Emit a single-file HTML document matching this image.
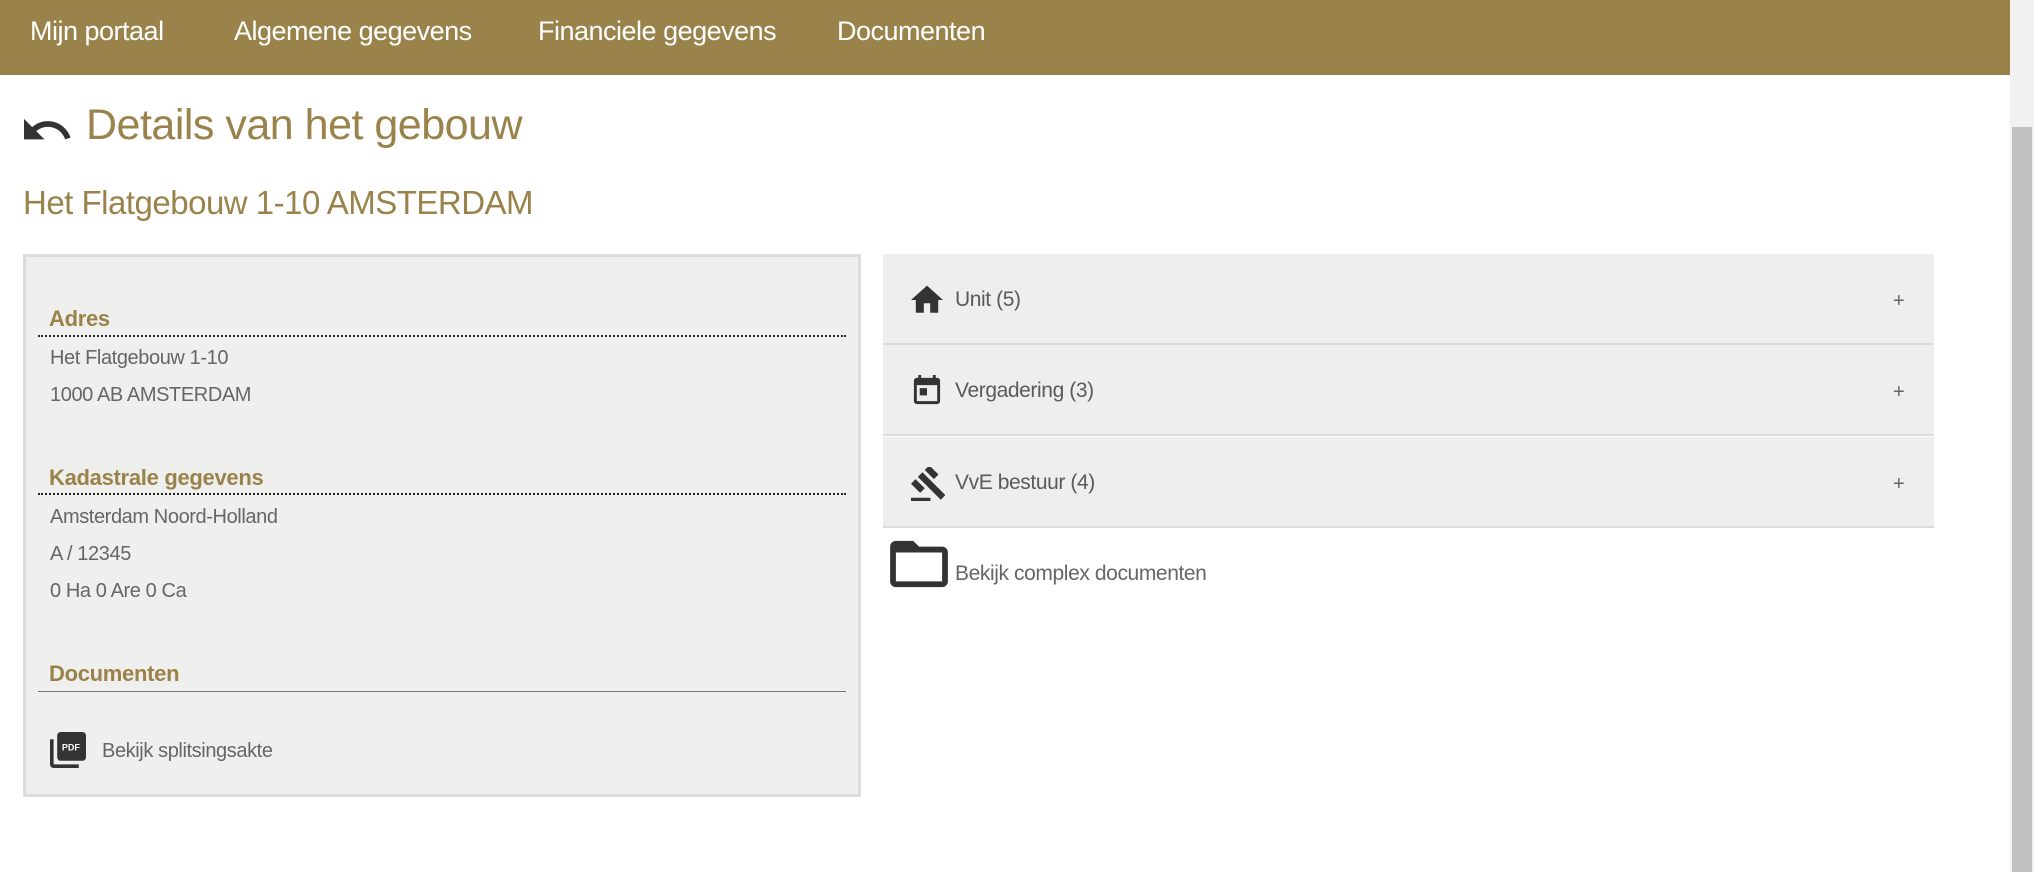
<!DOCTYPE html>
<html><head><meta charset="utf-8"><style>
*{margin:0;padding:0;box-sizing:border-box}
html,body{width:2034px;height:872px;overflow:hidden;background:#fff;font-family:"Liberation Sans",sans-serif}
.hdr{position:absolute;left:0;top:0;width:2010px;height:75px;background:#9a834b}
.hdr span{position:absolute;top:16px;color:#fff;font-size:27px;letter-spacing:-0.5px}
.sb{position:absolute;left:2010px;top:0;width:24px;height:872px;background:#f1f1f1}
.sb div{position:absolute;left:2px;top:127px;width:20px;height:745px;background:#c1c1c1}
.t{position:absolute;color:#9a834b;white-space:nowrap}
.panel{position:absolute;left:23px;top:254px;width:838px;height:543px;background:#efefed;border:3px solid #dcdcdc}
.h{position:absolute;left:49px;color:#9a834b;font-weight:bold;font-size:22px;letter-spacing:-0.3px}
.dl{position:absolute;left:38px;width:808px;border-top:2px dotted #222}
.v{position:absolute;left:50px;color:#666;font-size:20px;letter-spacing:-0.4px}
.acc{position:absolute;left:883px;width:1051px;height:91px;background:#eeeeee;border-bottom:2px solid #dcdcdc}
.acc svg{position:absolute;left:28px;top:30px}
.acc .l{position:absolute;left:72px;top:34px;font-size:21px;color:#5a5a5a;letter-spacing:-0.4px}
.acc .p{position:absolute;left:1010px;top:36px;font-size:20px;color:#666}
</style></head><body>
<div class="hdr">
<span style="left:30px">Mijn portaal</span>
<span style="left:234px">Algemene gegevens</span>
<span style="left:538px">Financiele gegevens</span>
<span style="left:837px">Documenten</span>
</div>
<div class="sb"><div></div></div>
<svg style="position:absolute;left:24px;top:106px" width="50" height="44" viewBox="2 4 22 14"><path fill="#333" d="M12.5 8c-2.65 0-5.05.99-6.9 2.6L2 7v9h9l-3.62-3.62c1.39-1.16 3.16-1.88 5.12-1.88 3.54 0 6.55 2.31 7.6 5.5l2.37-.78C21.08 11.03 17.15 8 12.5 8z"/></svg>
<div class="t" style="left:86px;top:101px;font-size:43px;letter-spacing:-0.5px">Details van het gebouw</div>
<div class="t" style="left:23px;top:184px;font-size:33px;letter-spacing:-0.5px">Het Flatgebouw 1-10 AMSTERDAM</div>
<div class="panel"></div>
<div class="h" style="top:306px">Adres</div>
<div class="dl" style="top:335px"></div>
<div class="v" style="top:347px">Het Flatgebouw 1-10</div>
<div class="v" style="top:384px">1000 AB AMSTERDAM</div>
<div class="h" style="top:465px">Kadastrale gegevens</div>
<div class="dl" style="top:493px"></div>
<div class="v" style="top:506px">Amsterdam Noord-Holland</div>
<div class="v" style="top:543px">A / 12345</div>
<div class="v" style="top:580px">0 Ha 0 Are 0 Ca</div>
<div class="h" style="top:661px">Documenten</div>
<div style="position:absolute;left:38px;top:691px;width:808px;border-top:1px solid #777"></div>
<svg style="position:absolute;left:50px;top:732px" width="36" height="36" viewBox="2 2 20 20"><path fill="#333" d="M20 2H8c-1.1 0-2 .9-2 2v12c0 1.1.9 2 2 2h12c1.1 0 2-.9 2-2V4c0-1.1-.9-2-2-2zM4 6H2v14c0 1.1.9 2 2 2h14v-2H4V6z"/><text x="8.6" y="12.3" font-size="5" font-weight="bold" fill="#fff" font-family="Liberation Sans">PDF</text></svg>
<div class="v" style="left:102px;top:740px">Bekijk splitsingsakte</div>
<div class="acc" style="top:254px"><svg width="32" height="32" viewBox="2 2 20 20"><path fill="#333" d="M10 20v-6h4v6h5v-8h3L12 3 2 12h3v8z"/></svg><span class="l">Unit (5)</span><span class="p">+</span></div>
<div class="acc" style="top:345px"><svg width="32" height="32" viewBox="2 1 20 22"><path fill="#333" d="M19 3h-1V1h-2v2H8V1H6v2H5c-1.11 0-2 .9-2 2v14c0 1.1.89 2 2 2h14c1.1 0 2-.9 2-2V5c0-1.1-.9-2-2-2zm0 16H5V8h14v11zM7 10h5v5H7z"/></svg><span class="l">Vergadering (3)</span><span class="p">+</span></div>
<div class="acc" style="top:437px"><svg width="34" height="34" viewBox="1 2 21 21"><path fill="#333" d="M1 21h12v2H1zM5.245 8.07l2.83-2.827 14.14 14.142-2.828 2.828zM12.317 1l5.657 5.656-2.83 2.83-5.654-5.66zM3.825 9.485l5.657 5.657-2.828 2.828-5.657-5.657z"/></svg><span class="l">VvE bestuur (4)</span><span class="p">+</span></div>
<svg style="position:absolute;left:888px;top:538px" width="62" height="52" viewBox="2 3 20 18"><path fill="#333" d="M20 6h-8l-2-2H4c-1.1 0-1.990.9-1.99 2L2 18c0 1.1.9 2 2 2h16c1.1 0 2-.9 2-2V8c0-1.1-.9-2-2-2zm0 12H4V8h16v10z"/></svg>
<div class="v" style="left:955px;top:562px;font-size:21px">Bekijk complex documenten</div>
</body></html>
